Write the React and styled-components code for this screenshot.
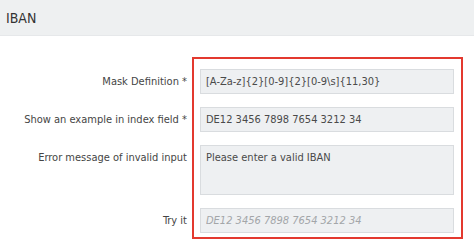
import React from 'react';
import styled, { createGlobalStyle } from 'styled-components';

const GlobalStyle = createGlobalStyle`
  html, body {
    margin: 0;
    padding: 0;
    background: #ffffff;
  }
  body {
    font-family: 'DejaVu Sans Condensed', 'DejaVu Sans', Tahoma, sans-serif;
    font-size: 11px;
    color: #454545;
  }
`;

const Header = styled.div`
  height: 35px;
  display: flex;
  align-items: center;
  padding-left: 6px;
  background: #eef0f1;
  border-bottom: 1px solid #e6e8ea;
  font-size: 14px;
  color: #333;
`;

const Form = styled.div`
  display: flex;
  margin-top: 21px;
`;

const Labels = styled.div`
  width: 187px;
  padding-right: 5px;
  padding-top: 12px;
  display: flex;
  flex-direction: column;
  gap: 13px;
`;

const Label = styled.div`
  height: ${props => props.$height}px;
  line-height: 25px;
  text-align: right;
  white-space: nowrap;
`;

const Highlight = styled.div`
  width: 254px;
  padding: 10px 7px 4px 6px;
  border: 2px solid #e3392f;
  display: flex;
  flex-direction: column;
  gap: 13px;
`;

const Input = styled.input`
  box-sizing: border-box;
  width: 100%;
  height: 25px;
  margin: 0;
  padding: 0 5px;
  border: 1px solid #d9dcdf;
  background: #eef0f2;
  font: inherit;
  color: #4a4a4a;
  outline: none;

  &::placeholder {
    color: #a3a6a9;
    font-style: italic;
  }
`;

const TextArea = styled.textarea`
  box-sizing: border-box;
  width: 100%;
  height: 50px;
  margin: 0;
  padding: 5px;
  border: 1px solid #d9dcdf;
  background: #eef0f2;
  font: inherit;
  color: #4a4a4a;
  resize: none;
  outline: none;
`;

const fields = [
  { label: 'Mask Definition *', height: 25 },
  { label: 'Show an example in index field *', height: 25 },
  { label: 'Error message of invalid input', height: 50 },
  { label: 'Try it', height: 25 },
];

export default function App() {
  return (
    <>
      <GlobalStyle />
      <Header>IBAN</Header>
      <Form>
        <Labels>
          {fields.map(f => (
            <Label key={f.label} $height={f.height}>{f.label}</Label>
          ))}
        </Labels>
        <Highlight>
          <Input readOnly value='[A-Za-z]{2}[0-9]{2}[0-9\s]{11,30}' />
          <Input readOnly value='DE12 3456 7898 7654 3212 34' />
          <TextArea readOnly value='Please enter a valid IBAN' />
          <Input placeholder='DE12 3456 7898 7654 3212 34' />
        </Highlight>
      </Form>
    </>
  );
}
